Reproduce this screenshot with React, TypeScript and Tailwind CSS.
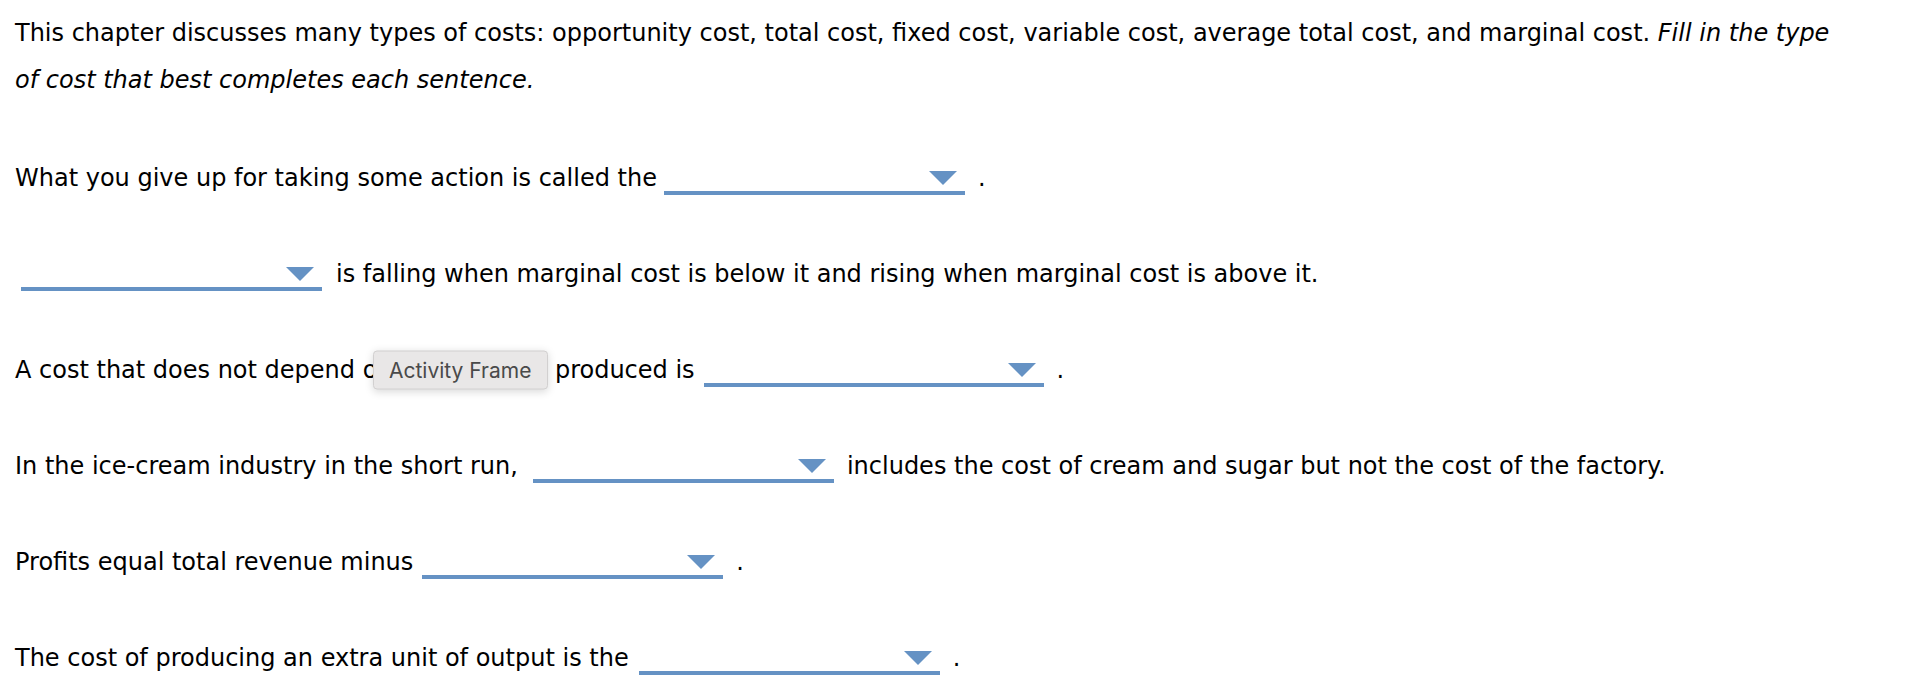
import React from 'react';

function Dropdown({ width = 'w-[301px]', className = '' }: { width?: string; className?: string }) {
  return (
    <span
      className={`relative inline-block shrink-0 h-[34px] border-b-4 border-[#6592c4] ${width} ${className}`}
    >
      <svg
        className="absolute right-[8px] top-[10px]"
        width="28"
        height="14"
        viewBox="0 0 28 14"
      >
        <polygon points="0,0 28,0 14,14" fill="#6592c4" />
      </svg>
    </span>
  );
}

function Row({ children }: { children: React.ReactNode }) {
  return <div className="flex items-center h-[96px] whitespace-nowrap">{children}</div>;
}

export default function App() {
  return (
    <div className="min-h-screen bg-white text-black font-['DejaVu_Sans','Verdana',sans-serif] text-[24px] pt-[10px] px-[15px]">
      <p className="w-[1838px] leading-[47px]">
        This chapter discusses many types of costs: opportunity cost, total cost, fixed cost, variable cost, average
        total cost, and marginal cost.{' '}
        <em className="italic">Fill in the type of cost that best completes each sentence.</em>
      </p>

      <div className="mt-[26px] flex flex-col">
        <Row>
          <span>What you give up for taking some action is called the</span>
          <Dropdown className="ml-[7px]" />
          <span className="ml-[13px]">.</span>
        </Row>

        <Row>
          <Dropdown className="ml-[6px]" />
          <span className="ml-[14px]">
            is falling when marginal cost is below it and rising when marginal cost is above it.
          </span>
        </Row>

        <Row>
          <span>
            A cost that does not depend{' '}
            <span className="relative">
              on the quantity
              <span className="absolute left-[10px] top-1/2 -translate-y-1/2 w-[175px] h-[39px] flex items-center justify-center rounded-[4px] border border-[#d2d0d0] bg-[#e9e7e7] shadow-[0_2px_8px_rgba(0,0,0,0.15)] font-['Inter','Liberation_Sans',sans-serif] text-[21px] text-[#4a4a4a]">
                Activity Frame
              </span>
            </span>{' '}
            produced is
          </span>
          <Dropdown width="w-[340px]" className="ml-[9px]" />
          <span className="ml-[13px]">.</span>
        </Row>

        <Row>
          <span>In the ice-cream industry in the short run,</span>
          <Dropdown className="ml-[15px]" />
          <span className="ml-[13px]">
            includes the cost of cream and sugar but not the cost of the factory.
          </span>
        </Row>

        <Row>
          <span>Profits equal total revenue minus</span>
          <Dropdown className="ml-[9px]" />
          <span className="ml-[13px]">.</span>
        </Row>

        <Row>
          <span>The cost of producing an extra unit of output is the</span>
          <Dropdown className="ml-[10px]" />
          <span className="ml-[13px]">.</span>
        </Row>
      </div>
    </div>
  );
}
